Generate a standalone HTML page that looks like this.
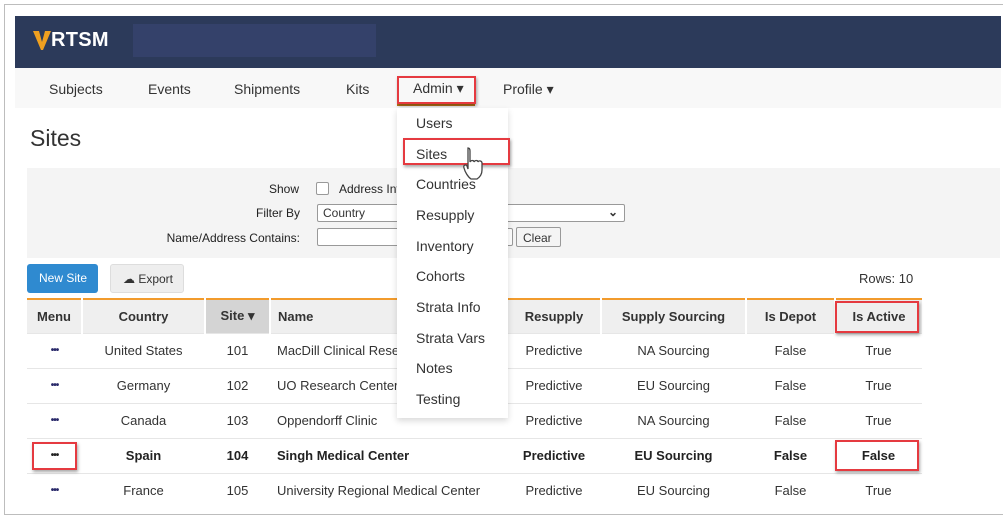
<!DOCTYPE html>
<html><head><style>
*{margin:0;padding:0;box-sizing:border-box}
body{width:1007px;height:516px;overflow:hidden;background:#fff;font-family:"Liberation Sans",sans-serif;color:#333;position:relative}
.a{position:absolute}
.frame{left:4px;top:4px;width:999px;height:511px;border:1px solid #bdbdbd;border-right:none}
.hdr{left:15px;top:16px;width:986px;height:52px;background:#2c3a5a}
.nav{left:15px;top:68px;width:986px;height:40px;background:#f8f8f8}
.nav span{position:absolute;top:13px;font-size:14px;color:#333}
.red{position:absolute;border:2.5px solid #e53a40;box-shadow:1px 2px 3px rgba(0,0,0,.35)}
.filt{left:27px;top:168px;width:973px;height:90px;background:#f4f4f4}
.lbl{font-size:12px;color:#222;text-align:right}
.inp{background:#fff;border:1px solid #999;border-radius:2px}
table{position:absolute;left:27px;top:298px;width:895px;border-collapse:collapse;font-size:13px;border-top:2px solid #f29b2c}
th{background:#efefef;height:34px;font-weight:bold;font-size:13px;color:#333;border-left:2px solid #fff}
td{height:35px;text-align:center;border-top:1px solid #e6e6e6;color:#333}
td.l,th.l{text-align:left;padding-left:7px}
tr.b td{font-weight:bold;color:#222}
.dots{color:#2a2a6a;font-weight:bold;font-size:10px;letter-spacing:-1px}
.dd{left:397px;top:108px;width:111px;height:310px;background:#fff;box-shadow:0 3px 6px rgba(0,0,0,.15)}
.dd div{position:absolute;left:19px;font-size:14px;color:#333}
</style></head><body>
<div class="a frame"></div>
<div class="a hdr">
 <div class="a" style="left:118px;top:8px;width:243px;height:33px;background:#34416a"></div>
 <svg class="a" style="left:18px;top:13px" width="18" height="22" viewBox="0 0 18 22"><path d="M0 2h6l3 11 3-11h6l-8 19h-2z" fill="#f0a020"/></svg>
 <div class="a" style="left:36px;top:13px;color:#fff;font-size:20px;font-weight:bold;letter-spacing:.3px">RTSM</div>
</div>
<div class="a nav">
 <span style="left:34px">Subjects</span><span style="left:133px">Events</span><span style="left:219px">Shipments</span><span style="left:331px">Kits</span>
 <span style="left:398px;top:12px">Admin ▾</span><span style="left:488px">Profile ▾</span>
 <div class="a" style="left:382px;top:35px;width:78px;height:3px;background:#c07818"></div>
</div>
<div class="red" style="left:397px;top:76px;width:79px;height:28px"></div>
<div class="a" style="left:30px;top:125px;font-size:23px;color:#333">Sites</div>
<div class="a filt">
 <div class="a lbl" style="left:200px;top:14px;width:72px">Show</div>
 <div class="a inp" style="left:289px;top:14px;width:13px;height:13px"></div>
 <div class="a lbl" style="left:312px;top:14px;text-align:left">Address Inf</div>
 <div class="a lbl" style="left:150px;top:38px;width:123px">Filter By</div>
 <div class="a inp" style="left:290px;top:36px;width:308px;height:18px;font-size:12px;padding:1px 5px">Country<span style="position:absolute;right:6px;top:0;font-weight:bold">⌄</span></div>
 <div class="a lbl" style="left:100px;top:63px;width:173px">Name/Address Contains:</div>
 <div class="a inp" style="left:290px;top:60px;width:196px;height:18px"></div>
 <div class="a inp" style="left:489px;top:59px;width:45px;height:20px;font-size:12px;padding:3px 6px;background:#f4f4f4">Clear</div>
</div>
<div class="a" style="left:27px;top:264px;width:71px;height:29px;background:#2f8ad0;border-radius:3px;color:#fff;font-size:12px;padding:7px 0 0 12px">New Site</div>
<div class="a" style="left:110px;top:264px;width:74px;height:29px;background:#eee;border:1px solid #ddd;border-radius:3px;font-size:12px;padding:7px 0 0 12px">☁ Export</div>
<div class="a" style="left:859px;top:271px;font-size:13px">Rows: 10</div>
<table>
<tr><th style="width:55px;border-left:none">Menu</th><th style="width:123px">Country</th><th style="width:65px;background:#d4d4d4">Site ▾</th><th class="l" style="width:237px">Name</th><th style="width:94px">Resupply</th><th style="width:145px">Supply Sourcing</th><th style="width:89px">Is Depot</th><th>Is Active</th></tr>
<tr><td class="dots">•••</td><td>United States</td><td>101</td><td class="l">MacDill Clinical Research</td><td>Predictive</td><td>NA Sourcing</td><td>False</td><td>True</td></tr>
<tr><td class="dots">•••</td><td>Germany</td><td>102</td><td class="l">UO Research Center</td><td>Predictive</td><td>EU Sourcing</td><td>False</td><td>True</td></tr>
<tr><td class="dots">•••</td><td>Canada</td><td>103</td><td class="l">Oppendorff Clinic</td><td>Predictive</td><td>NA Sourcing</td><td>False</td><td>True</td></tr>
<tr class="b"><td class="dots">•••</td><td>Spain</td><td>104</td><td class="l">Singh Medical Center</td><td>Predictive</td><td>EU Sourcing</td><td>False</td><td>False</td></tr>
<tr><td class="dots">•••</td><td>France</td><td>105</td><td class="l">University Regional Medical Center</td><td>Predictive</td><td>EU Sourcing</td><td>False</td><td>True</td></tr>
</table>
<div class="red" style="left:835px;top:301px;width:84px;height:32px"></div>
<div class="red" style="left:835px;top:440px;width:84px;height:31px"></div>
<div class="red" style="left:32px;top:442px;width:45px;height:28px"></div>
<div class="a dd">
 <div style="top:7px">Users</div><div style="top:38px">Sites</div><div style="top:68px">Countries</div><div style="top:99px">Resupply</div><div style="top:130px">Inventory</div><div style="top:160px">Cohorts</div><div style="top:191px">Strata Info</div><div style="top:222px">Strata Vars</div><div style="top:252px">Notes</div><div style="top:283px">Testing</div>
</div>
<div class="red" style="left:403px;top:138px;width:107px;height:27px"></div>
<svg class="a" style="left:462px;top:146px" width="26" height="34" viewBox="0 0 26 34"><path d="M6 2c2 0 2 2 2 3v11c1-2 4-2 4 0 1-2 4-2 4 0 1-2 4-1 4 1v7c0 4-2 7-5 9H9C6 31 3 26 2 22c-1-3 2-4 3-2l1 3V4c0-1 0-2 0-2z" fill="#fff" stroke="#444" stroke-width="1.3"/></svg>
</body></html>
